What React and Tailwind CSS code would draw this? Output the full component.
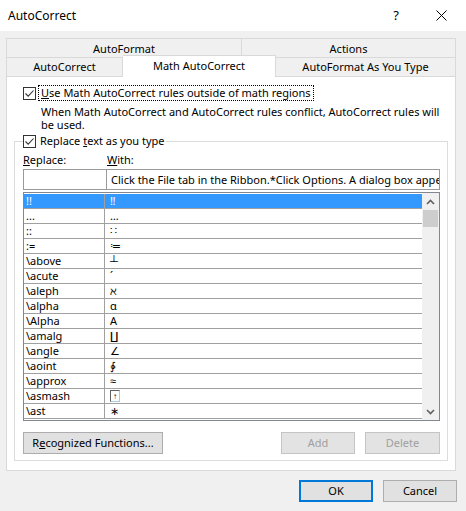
import React from 'react';

const rows = [
  ['!!', '‼'],
  ['...', '…'],
  ['::', '∷'],
  [':=', '≔'],
  ['\\above', '┴'],
  ['\\acute', '´'],
  ['\\aleph', 'ℵ'],
  ['\\alpha', 'α'],
  ['\\Alpha', 'Α'],
  ['\\amalg', '∐'],
  ['\\angle', '∠'],
  ['\\aoint', '∳'],
  ['\\approx', '≈'],
  ['\\asmash', 'box'],
  ['\\ast', '∗'],
];

/* ── small checked box ── */
const Check = () => (
  <span className="w-[13px] h-[13px] border border-[#333333] bg-white flex items-center justify-center shrink-0">
    <svg width="11" height="11" viewBox="0 0 11 11" aria-hidden="true">
      <path d="M1.5 5.5L4.2 8.2L9.5 2.5" stroke="#333333" strokeWidth="1.1" fill="none" />
    </svg>
  </span>
);

const Chevron = ({ up }) => (
  <svg width="9" height="6" viewBox="0 0 9 6" aria-hidden="true">
    <path
      d={up ? 'M1 5L4.5 1.5L8 5' : 'M1 1L4.5 4.5L8 1'}
      stroke="#606060"
      strokeWidth="1.6"
      fill="none"
    />
  </svg>
);

const Btn = ({ children, className = '', disabled }) => (
  <button
    className={`h-[22px] flex items-center justify-center border text-[11px] ${
      disabled
        ? 'bg-[#e3e3e3] border-[#c4c4c4] text-[#a0a0a0]'
        : 'bg-[#e1e1e1] border-[#adadad] text-black'
    } ${className}`}
  >
    {children}
  </button>
);

export default function App() {
  return (
    <div className="w-[466px] h-[511px] bg-[#f0f0f0] text-black text-[11px] overflow-hidden font-['Noto_Sans',sans-serif]">
      {/* ── Title bar ── */}
      <div className="h-[31px] bg-white flex items-center pl-[8px]">
        <span className="text-[12px] leading-none">AutoCorrect</span>
        <span className="ml-auto mr-[37px] text-[13px] leading-none">?</span>
        <svg width="11" height="11" viewBox="0 0 11 11" className="mr-[19px]" aria-hidden="true">
          <path d="M0.5 0.5L10.5 10.5M10.5 0.5L0.5 10.5" stroke="#000" strokeWidth="1" />
        </svg>
      </div>

      {/* ── Tabs ── */}
      <div className="pl-[6px] pt-[7px]">
        <div className="flex w-[450px] h-[19px]">
          <div className="w-[236px] border border-b-0 border-[#d9d9d9] flex items-center justify-center pt-[2px]">
            AutoFormat
          </div>
          <div className="flex-1 border border-l-0 border-b-0 border-[#d9d9d9] flex items-center justify-center pt-[2px]">
            Actions
          </div>
        </div>
        <div className="flex w-[450px] h-[20px] items-end">
          <div className="w-[117px] h-[20px] border border-[#d9d9d9] flex items-center justify-center">
            AutoCorrect
          </div>
          <div className="w-[153px] h-[22px] bg-white border border-b-0 border-l-0 border-[#d9d9d9] flex items-center justify-center relative z-10">
            Math AutoCorrect
          </div>
          <div className="flex-1 h-[20px] border border-l-0 border-[#d9d9d9] flex items-center justify-center">
            AutoFormat As You Type
          </div>
        </div>

        {/* ── Panel ── */}
        <div className="w-[450px] h-[394px] bg-white border border-t-0 border-[#d9d9d9] pt-[8px]">
          <div className="flex items-center h-[16px] pl-[16px]">
            <Check />
            <span className="ml-[2px] px-[2px] h-[16px] leading-[14px] border border-dotted border-black whitespace-nowrap">
              <u>U</u>se Math AutoCorrect rules outside of math regions
            </span>
          </div>
          <p className="pl-[34px] mt-[4px] leading-[13px] whitespace-nowrap">
            When Math AutoCorrect and AutoCorrect rules conflict, AutoCorrect rules will
            <br />
            be used.
          </p>

          {/* ── Replace group ── */}
          <fieldset className="min-w-0 mx-[7px] mt-[2px] border border-[#dcdcdc] pl-[8px] pr-[7px] pb-[6px]">
            <legend className="flex items-center h-[16px] pr-[1px]">
              <Check />
              <span className="ml-[4px] leading-[16px] whitespace-nowrap">
                Replace <u>t</u>ext as you type
              </span>
            </legend>

            <div className="flex h-[16px] mt-[3px] leading-[16px]">
              <span className="w-[84px]">
                <u>R</u>eplace:
              </span>
              <span>
                <u>W</u>ith:
              </span>
            </div>

            <div className="flex h-[21px] mt-[1px]">
              <div className="w-[84px] border border-[#9a9a9a] bg-white" />
              <div className="flex-1 min-w-0 border border-l-0 border-[#9a9a9a] bg-white overflow-hidden whitespace-nowrap pl-[4px] leading-[19px]">
                Click the File tab in the Ribbon.*Click Options. A dialog box appears.
              </div>
            </div>

            {/* ── List ── */}
            <div className="mt-[2px] h-[229px] border border-[#828790] bg-white flex">
              <div className="flex-1 pt-[1px]">
                {rows.map(([a, b], i) => (
                  <div
                    key={a}
                    className={`flex h-[15px] border-b border-[#a0a0a0] leading-[14px] ${
                      i === 0 ? 'bg-[#3399ff] text-white' : ''
                    }`}
                  >
                    <span className="w-[81px] pl-[2px] border-r border-[#a0a0a0] whitespace-nowrap">{a}</span>
                    <span className="pl-[5px] whitespace-nowrap">
                      {b === 'box' ? (
                        <span className="inline-flex w-[10px] h-[12px] mt-[1px] border border-[#606060] border-r-[#aac8e8] border-b-[#aac8e8] items-center justify-center text-[8px] leading-none align-top">
                          ↑
                        </span>
                      ) : (
                        b
                      )}
                    </span>
                  </div>
                ))}
              </div>
              <div className="w-[17px] bg-[#f0f0f0] flex flex-col items-center">
                <div className="h-[17px] flex items-center justify-center">
                  <Chevron up />
                </div>
                <div className="w-[15px] h-[17px] bg-[#cdcdcd]" />
                <div className="mt-auto h-[17px] flex items-center justify-center">
                  <Chevron />
                </div>
              </div>
            </div>

            <div className="flex mt-[11px]">
              <Btn className="w-[140px]">
                R<u>e</u>cognized Functions...
              </Btn>
              <Btn disabled className="w-[74px] ml-auto">
                Add
              </Btn>
              <Btn disabled className="w-[75px] ml-[10px]">
                Delete
              </Btn>
            </div>
          </fieldset>
        </div>
      </div>

      {/* ── Dialog buttons ── */}
      <div className="flex justify-end pr-[9px] mt-[9px]">
        <button className="w-[74px] h-[22px] bg-[#e1e1e1] border-2 border-[#0078d7] text-[11px]">OK</button>
        <Btn className="w-[74px] ml-[10px]">Cancel</Btn>
      </div>
    </div>
  );
}
